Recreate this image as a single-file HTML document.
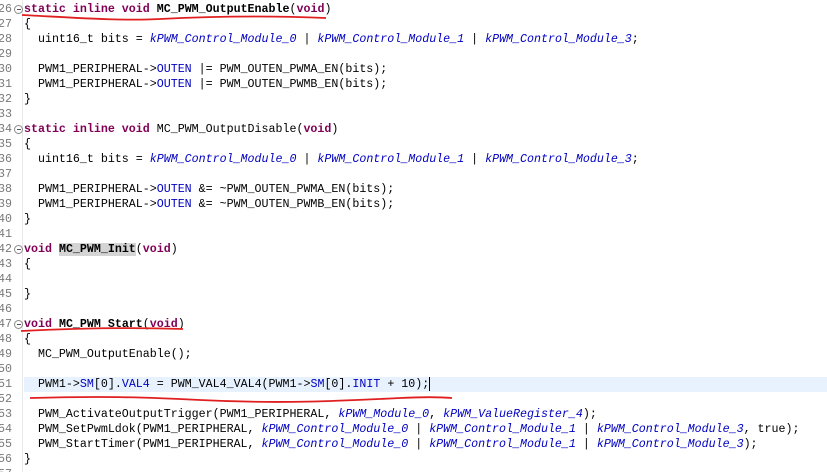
<!DOCTYPE html>
<html><head><meta charset="utf-8"><style>
html,body{margin:0;padding:0;background:#fff;width:827px;height:472px;overflow:hidden;}
body{position:relative;font-family:"Liberation Mono",monospace;font-size:11.65px;}
.g{position:absolute;left:0;top:0;width:22px;height:472px;border-right:1px solid #e8e8e8;}
.l{position:absolute;left:0;height:15px;line-height:15px;white-space:pre;width:827px;}
.n{position:absolute;left:-2px;width:24px;color:#787878;}
.c{position:absolute;left:24px;color:#000;}
.k{color:#7f0055;font-weight:bold;}
.b{font-weight:bold;}
.e{color:#0000c0;font-style:italic;}
.f{color:#0000c0;}
.cur{background:#e8f2ff;}
.fold{position:absolute;left:14px;top:3px;width:7px;height:7px;border:1px solid #8a8a8a;border-radius:50%;background:#fff;}
.fold:after{content:"";position:absolute;left:1.5px;top:3px;width:4px;height:1px;background:#555;}
.hl{background:#d4d4d4;}
</style></head><body>
<div class="g"></div>
<div class="l" style="top:2px"><span class="n">26</span><span class="fold"></span><span class="c"><span class="k">static inline void</span> <span class="b">MC_PWM_OutputEnable</span>(<span class="k">void</span>)</span></div>
<div class="l" style="top:17px"><span class="n">27</span><span class="c">{</span></div>
<div class="l" style="top:32px"><span class="n">28</span><span class="c">  uint16_t bits = <span class="e">kPWM_Control_Module_0</span> | <span class="e">kPWM_Control_Module_1</span> | <span class="e">kPWM_Control_Module_3</span>;</span></div>
<div class="l" style="top:47px"><span class="n">29</span></div>
<div class="l" style="top:62px"><span class="n">30</span><span class="c">  PWM1_PERIPHERAL-&gt;<span class="f">OUTEN</span> |= PWM_OUTEN_PWMA_EN(bits);</span></div>
<div class="l" style="top:77px"><span class="n">31</span><span class="c">  PWM1_PERIPHERAL-&gt;<span class="f">OUTEN</span> |= PWM_OUTEN_PWMB_EN(bits);</span></div>
<div class="l" style="top:92px"><span class="n">32</span><span class="c">}</span></div>
<div class="l" style="top:107px"><span class="n">33</span></div>
<div class="l" style="top:122px"><span class="n">34</span><span class="fold"></span><span class="c"><span class="k">static inline void</span> MC_PWM_OutputDisable(<span class="k">void</span>)</span></div>
<div class="l" style="top:137px"><span class="n">35</span><span class="c">{</span></div>
<div class="l" style="top:152px"><span class="n">36</span><span class="c">  uint16_t bits = <span class="e">kPWM_Control_Module_0</span> | <span class="e">kPWM_Control_Module_1</span> | <span class="e">kPWM_Control_Module_3</span>;</span></div>
<div class="l" style="top:167px"><span class="n">37</span></div>
<div class="l" style="top:182px"><span class="n">38</span><span class="c">  PWM1_PERIPHERAL-&gt;<span class="f">OUTEN</span> &amp;= ~PWM_OUTEN_PWMA_EN(bits);</span></div>
<div class="l" style="top:197px"><span class="n">39</span><span class="c">  PWM1_PERIPHERAL-&gt;<span class="f">OUTEN</span> &amp;= ~PWM_OUTEN_PWMB_EN(bits);</span></div>
<div class="l" style="top:212px"><span class="n">40</span><span class="c">}</span></div>
<div class="l" style="top:227px"><span class="n">41</span></div>
<div class="l" style="top:242px"><span class="n">42</span><span class="fold"></span><span class="c"><span class="k">void</span> <span class="b hl">MC_PWM_Init</span>(<span class="k">void</span>)</span></div>
<div class="l" style="top:257px"><span class="n">43</span><span class="c">{</span></div>
<div class="l" style="top:272px"><span class="n">44</span></div>
<div class="l" style="top:287px"><span class="n">45</span><span class="c">}</span></div>
<div class="l" style="top:302px"><span class="n">46</span></div>
<div class="l" style="top:317px"><span class="n">47</span><span class="fold"></span><span class="c"><span class="k">void</span> <span class="b">MC_PWM_Start</span>(<span class="k">void</span>)</span></div>
<div class="l" style="top:332px"><span class="n">48</span><span class="c">{</span></div>
<div class="l" style="top:347px"><span class="n">49</span><span class="c">  MC_PWM_OutputEnable();</span></div>
<div class="l" style="top:362px"><span class="n">50</span></div>
<div class="l" style="top:377px"><span class="n">51</span><div class="cur" style="position:absolute;left:24px;top:0;width:803px;height:15px"></div><span class="c">  PWM1-&gt;<span class="f">SM</span>[0].<span class="f">VAL4</span> = PWM_VAL4_VAL4(PWM1-&gt;<span class="f">SM</span>[0].<span class="f">INIT</span> + 10);<span style="display:inline-block;width:1px;height:14px;background:#000;vertical-align:top"></span></span></div>
<div class="l" style="top:392px"><span class="n">52</span></div>
<div class="l" style="top:407px"><span class="n">53</span><span class="c">  PWM_ActivateOutputTrigger(PWM1_PERIPHERAL, <span class="e">kPWM_Module_0</span>, <span class="e">kPWM_ValueRegister_4</span>);</span></div>
<div class="l" style="top:422px"><span class="n">54</span><span class="c">  PWM_SetPwmLdok(PWM1_PERIPHERAL, <span class="e">kPWM_Control_Module_0</span> | <span class="e">kPWM_Control_Module_1</span> | <span class="e">kPWM_Control_Module_3</span>, true);</span></div>
<div class="l" style="top:437px"><span class="n">55</span><span class="c">  PWM_StartTimer(PWM1_PERIPHERAL, <span class="e">kPWM_Control_Module_0</span> | <span class="e">kPWM_Control_Module_1</span> | <span class="e">kPWM_Control_Module_3</span>);</span></div>
<div class="l" style="top:452px"><span class="n">56</span><span class="c">}</span></div>
<div class="l" style="top:467px"><span class="n">57</span></div>
<svg style="position:absolute;left:0;top:0" width="827" height="472">
<path d="M22 15 C80 18 120 21 160 19 C220 16 280 16 326 18" stroke="#e02020" stroke-width="1.8" fill="none"/>
<path d="M21 331 C60 329 120 327 183 329" stroke="#e02020" stroke-width="1.8" fill="none"/>
<path d="M30 398 C100 396 140 397 200 400 C280 404 340 401 400 398 C420 397 440 397 452 398" stroke="#e02020" stroke-width="1.8" fill="none"/>
</svg>
</body></html>
